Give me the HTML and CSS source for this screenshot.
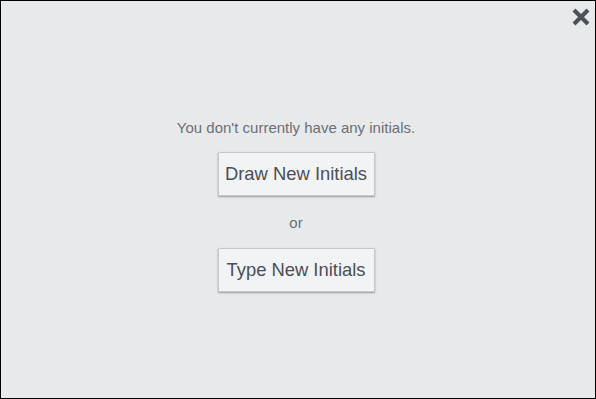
FILE: index.html
```html
<!DOCTYPE html>
<html lang="en">
<head>
    <meta charset="UTF-8">
    <meta name="viewport" content="width=device-width, initial-scale=1.0">
    <title>Initials</title>
    <link rel="stylesheet" href="styles.css">
</head>
<body>
    <div class="dialog">
        <button class="close" type="button" aria-label="Close">
            <svg width="18" height="18" viewBox="0 0 18 18">
                <path d="M2 2 L16 16 M16 2 L2 16" stroke="#4d5257" stroke-width="4.2" stroke-linecap="butt"/>
            </svg>
        </button>
        <p class="message">You don't currently have any initials.</p>
        <button class="btn" type="button">Draw New Initials</button>
        <p class="or">or</p>
        <button class="btn" type="button">Type New Initials</button>
    </div>
</body>
</html>
```

FILE: styles.css
```css
html, body {
    margin: 0;
    padding: 0;
}

body {
    font-family: "Liberation Sans", Arial, sans-serif;
    width: 596px;
    height: 399px;
    box-sizing: border-box;
    border: 1px solid #000000;
    background-color: #e8e9eb;
    overflow: hidden;
}

.dialog {
    position: relative;
    height: 100%;
    display: flex;
    flex-direction: column;
    align-items: center;
    padding: 118px 4px 0 0;
    box-sizing: border-box;
}

.close {
    position: absolute;
    top: 7px;
    right: 5px;
    padding: 0;
    border: none;
    background: none;
    width: 18px;
    height: 18px;
    cursor: pointer;
}

.close svg {
    display: block;
}

.message,
.or {
    margin: 0;
    font-size: 15px;
    line-height: 17px;
    color: #6c7075;
}

.or {
    margin-top: 18px;
}

.btn {
    margin-top: 16px;
    width: 157px;
    height: 44px;
    padding: 0;
    font-family: "Liberation Sans", Arial, sans-serif;
    font-size: 18.4px;
    color: #4a4f55;
    background-color: #f2f3f5;
    border: 1px solid #c6c8ca;
    border-radius: 1px;
    box-shadow: 0 1px 2px rgba(0, 0, 0, 0.35);
    cursor: pointer;
}

.or + .btn {
    margin-top: 17px;
}
```
